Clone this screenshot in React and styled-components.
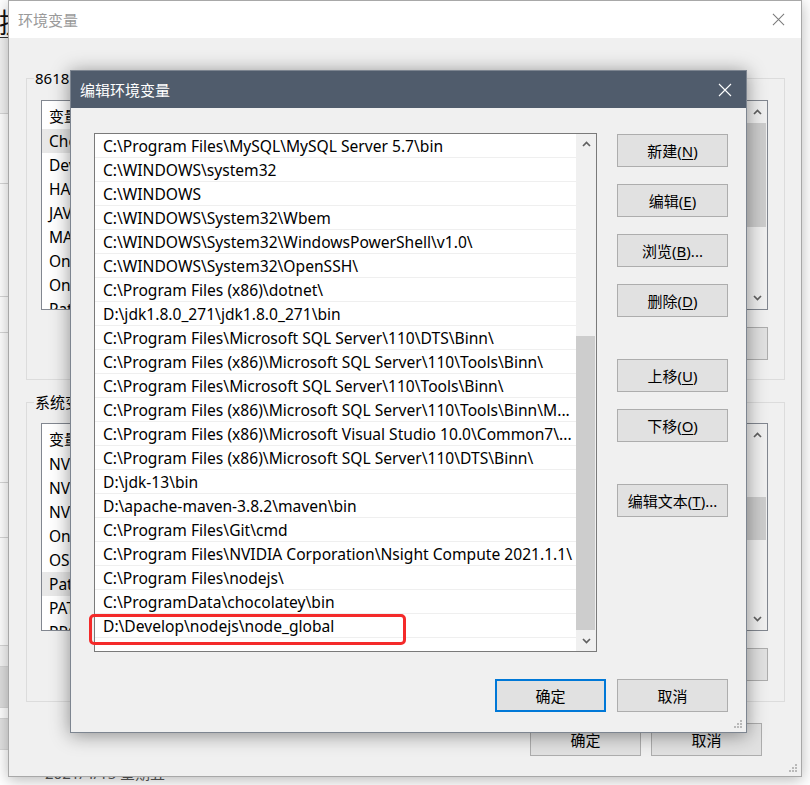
import React from "react";
import styled, { createGlobalStyle } from "styled-components";

const UI_FONT = `"Noto Sans", "Noto Sans CJK SC", sans-serif`;

const GlobalStyle = createGlobalStyle`
  html, body { margin: 0; padding: 0; background: #ffffff; }
  body { font-family: ${UI_FONT}; color: #000; }
  #root { width: 810px; height: 785px; }
`;

const userVars = [
  "ChocolateyLastPathUpdate",
  "DevEco Studio",
  "HADOOP_HOME",
  "JAVA_HOME",
  "MAVEN_HOME",
  "OneDrive",
  "OneDriveConsumer",
  "Path",
];

const systemVars = [
  "NVCUDASAMPLES_ROOT",
  "NVCUDASAMPLES11_2_ROOT",
  "NVTOOLSEXT_PATH",
  "OnlineServices",
  "OS",
  "Path",
  "PATHEXT",
  "PROCESSOR_ARCHITECTURE",
];

const paths = [
  "C:\\Program Files\\MySQL\\MySQL Server 5.7\\bin",
  "C:\\WINDOWS\\system32",
  "C:\\WINDOWS",
  "C:\\WINDOWS\\System32\\Wbem",
  "C:\\WINDOWS\\System32\\WindowsPowerShell\\v1.0\\",
  "C:\\WINDOWS\\System32\\OpenSSH\\",
  "C:\\Program Files (x86)\\dotnet\\",
  "D:\\jdk1.8.0_271\\jdk1.8.0_271\\bin",
  "C:\\Program Files\\Microsoft SQL Server\\110\\DTS\\Binn\\",
  "C:\\Program Files (x86)\\Microsoft SQL Server\\110\\Tools\\Binn\\",
  "C:\\Program Files\\Microsoft SQL Server\\110\\Tools\\Binn\\",
  "C:\\Program Files (x86)\\Microsoft SQL Server\\110\\Tools\\Binn\\M...",
  "C:\\Program Files (x86)\\Microsoft Visual Studio 10.0\\Common7\\...",
  "C:\\Program Files (x86)\\Microsoft SQL Server\\110\\DTS\\Binn\\",
  "D:\\jdk-13\\bin",
  "D:\\apache-maven-3.8.2\\maven\\bin",
  "C:\\Program Files\\Git\\cmd",
  "C:\\Program Files\\NVIDIA Corporation\\Nsight Compute 2021.1.1\\",
  "C:\\Program Files\\nodejs\\",
  "C:\\ProgramData\\chocolatey\\bin",
  "D:\\Develop\\nodejs\\node_global",
];

const backStrips = [
  { h: 76, bg: "#f2f2f2" },
  { h: 70, bg: "#ffffff" },
  { h: 113, bg: "#ffffff" },
  { h: 36, bg: "#ffffff" },
  { h: 150, bg: "#ffffff" },
  { h: 55, bg: "#ffffff" },
  { h: 108, bg: "#ffffff" },
  { h: 21, bg: "#f4f4f4" },
  { h: 41, bg: "#dedede" },
  { h: 11, bg: "#ffffff" },
  { h: 31, bg: "#e2e2e2" },
];

function Chevron({ down }) {
  return (
    <svg width="9" height="6" viewBox="0 0 9 6">
      <polyline
        points={down ? "1,1 4.5,4.5 8,1" : "1,5 4.5,1.5 8,5"}
        fill="none"
        stroke="#606060"
        strokeWidth="1.7"
      />
    </svg>
  );
}

function CloseIcon({ color, size }) {
  return (
    <svg width={size} height={size} viewBox="0 0 14 14">
      <path d="M1 1 L13 13 M13 1 L1 13" stroke={color} strokeWidth="1.1" />
    </svg>
  );
}

function Gripper() {
  return (
    <svg width="9" height="9" viewBox="0 0 9 9">
      {[
        [6, 0],
        [3, 3],
        [6, 3],
        [0, 6],
        [3, 6],
        [6, 6],
      ].map(([x, y]) => (
        <rect key={`${x}-${y}`} x={x} y={y} width="2" height="2" fill="#b9b9b9" />
      ))}
    </svg>
  );
}

function VarList({ items, selected, height, thumbTop, thumbHeight }) {
  return (
    <ListView $height={height}>
      <LVContent>
        <LVHeader>变量</LVHeader>
        {items.map((name, i) => (
          <LVRow key={name + i} $selected={i === selected}>
            {name}
          </LVRow>
        ))}
      </LVContent>
      <LVScroll>
        <LVScrollBtn>
          <Chevron />
        </LVScrollBtn>
        <ScrollTrack>
          <Thumb $top={thumbTop} $height={thumbHeight} />
        </ScrollTrack>
        <LVScrollBtn>
          <Chevron down />
        </LVScrollBtn>
      </LVScroll>
    </ListView>
  );
}

export default function App() {
  return (
    <>
      <GlobalStyle />
      <Desktop>
        <BackApp>
          <BackTitle>提示</BackTitle>
          {backStrips.map((s, i) => (
            <BackStrip key={i} $h={s.h} $bg={s.bg} />
          ))}
          <BackDate>2021/4/15 星期五</BackDate>
        </BackApp>

        <EnvWindow>
          <EnvTitleBar>
            <EnvTitle>环境变量</EnvTitle>
            <CloseIcon color="#7a7a7a" size={13} />
          </EnvTitleBar>
          <EnvBody>
            <Group>
              <Legend>86181的用户变量(U)</Legend>
              <VarList items={userVars} selected={0} height={210} thumbTop={0} thumbHeight={104} />
              <GroupButtons>
                <GroupBtn>新建(N)...</GroupBtn>
                <GroupBtn>编辑(E)...</GroupBtn>
                <GroupBtn>删除(D)</GroupBtn>
              </GroupButtons>
            </Group>
            <Group $last>
              <Legend>系统变量(S)</Legend>
              <VarList items={systemVars} selected={5} height={208} thumbTop={51} thumbHeight={43} />
              <GroupButtons>
                <GroupBtn>新建(W)...</GroupBtn>
                <GroupBtn>编辑(I)...</GroupBtn>
                <GroupBtn>删除(L)</GroupBtn>
              </GroupButtons>
            </Group>
            <EnvFooter>
              <GroupBtn $wide>确定</GroupBtn>
              <GroupBtn $wide>取消</GroupBtn>
            </EnvFooter>
          </EnvBody>
          <GripCorner>
            <Gripper />
          </GripCorner>
        </EnvWindow>

        <EditDialog>
          <DlgTitleBar>
            <DlgTitle>编辑环境变量</DlgTitle>
            <CloseIcon color="#ffffff" size={14} />
          </DlgTitleBar>
          <DlgBody>
            <DlgMain>
              <PathBox>
                <PathList>
                  {paths.map((p) => (
                    <PathRow key={p}>{p}</PathRow>
                  ))}
                </PathList>
                <PathScroll>
                  <PathScrollBtn>
                    <Chevron />
                  </PathScrollBtn>
                  <ScrollTrack>
                    <Thumb $top={182} $height={294} />
                  </ScrollTrack>
                  <PathScrollBtn>
                    <Chevron down />
                  </PathScrollBtn>
                </PathScroll>
                <Highlight />
              </PathBox>
              <ButtonColumn>
                <DlgButton $gap={1}>
                  新建(<u>N</u>)
                </DlgButton>
                <DlgButton $gap={17}>
                  编辑(<u>E</u>)
                </DlgButton>
                <DlgButton $gap={17}>
                  浏览(<u>B</u>)...
                </DlgButton>
                <DlgButton $gap={17}>
                  删除(<u>D</u>)
                </DlgButton>
                <DlgButton $gap={42}>
                  上移(<u>U</u>)
                </DlgButton>
                <DlgButton $gap={17}>
                  下移(<u>O</u>)
                </DlgButton>
                <DlgButton $gap={42}>
                  编辑文本(<u>T</u>)...
                </DlgButton>
              </ButtonColumn>
            </DlgMain>
            <DlgFooter>
              <DlgButton $primary>确定</DlgButton>
              <DlgButton>取消</DlgButton>
            </DlgFooter>
          </DlgBody>
          <GripCorner>
            <Gripper />
          </GripCorner>
        </EditDialog>
      </Desktop>
    </>
  );
}

const Desktop = styled.div`
  position: relative;
  width: 810px;
  height: 785px;
  overflow: hidden;
  background: #ffffff;
  font-family: ${UI_FONT};
`;

/* window behind everything, only its left edge shows */
const BackApp = styled.div`
  position: absolute;
  left: 0;
  top: 0;
  width: 300px;
  height: 785px;
  display: flex;
  flex-direction: column;
  background: #ffffff;
`;

const BackTitle = styled.div`
  height: 38px;
  flex-shrink: 0;
  margin-left: -1px;
  font-family: "Noto Sans CJK SC", sans-serif;
  font-size: 27px;
  line-height: 44px;
  color: #111;
  border-bottom: 1px solid #333;
  box-sizing: border-box;
`;

const BackStrip = styled.div`
  height: ${(p) => p.$h}px;
  flex-shrink: 0;
  background: ${(p) => p.$bg};
  border-bottom: 1px solid #d6d6d6;
  box-sizing: border-box;
`;

const BackDate = styled.div`
  margin-top: auto;
  height: 24px;
  padding-left: 45px;
  font-size: 15px;
  line-height: 24px;
  color: #555;
  white-space: nowrap;
`;

const EnvWindow = styled.div`
  position: absolute;
  left: 8px;
  top: 0;
  width: 794px;
  height: 777px;
  box-sizing: border-box;
  border: 1px solid #a8a8a8;
  background: #f0f0f0;
  box-shadow: 0 3px 14px rgba(0, 0, 0, 0.28);
  display: flex;
  flex-direction: column;
`;

const EnvTitleBar = styled.div`
  height: 37px;
  flex-shrink: 0;
  background: #ffffff;
  display: flex;
  align-items: center;
  justify-content: space-between;
  padding: 0 16px 0 9px;
`;

const EnvTitle = styled.span`
  font-size: 15px;
  color: #9a9a9a;
`;

const EnvBody = styled.div`
  flex: 1;
  display: flex;
  flex-direction: column;
  padding: 40px 16px 0 17px;
`;

const Group = styled.div`
  position: relative;
  border: 1px solid #dcdcdc;
  padding: ${(p) => (p.$last ? "20px 16px 20px 14px" : "21px 16px 19px 14px")};
  margin-bottom: ${(p) => (p.$last ? "21px" : "22px")};
  display: flex;
  flex-direction: column;
`;

const Legend = styled.span`
  position: absolute;
  left: 7px;
  top: -11px;
  padding: 0 1px;
  background: #f0f0f0;
  font-size: 15px;
  line-height: 20px;
  white-space: nowrap;
`;

const ListView = styled.div`
  height: ${(p) => p.$height}px;
  box-sizing: border-box;
  border: 1px solid #828790;
  background: #ffffff;
  display: flex;
  overflow: hidden;
`;

const LVContent = styled.div`
  flex: 1;
  display: flex;
  flex-direction: column;
  overflow: hidden;
`;

const LVHeader = styled.div`
  height: 28px;
  flex-shrink: 0;
  display: flex;
  align-items: center;
  padding-left: 7px;
  font-size: 15px;
`;

const LVRow = styled.div`
  height: 24px;
  flex-shrink: 0;
  display: flex;
  align-items: center;
  padding-left: 7px;
  font-size: 15.5px;
  white-space: nowrap;
  background: ${(p) => (p.$selected ? "#e8e8e8" : "transparent")};
`;

const LVScroll = styled.div`
  width: 20px;
  flex-shrink: 0;
  background: #f0f0f0;
  display: flex;
  flex-direction: column;
`;

const LVScrollBtn = styled.div`
  height: 22px;
  flex-shrink: 0;
  display: flex;
  align-items: center;
  justify-content: center;
`;

const ScrollTrack = styled.div`
  flex: 1;
  display: flex;
  flex-direction: column;
`;

const Thumb = styled.div`
  margin: ${(p) => p.$top}px 1px 0 0;
  height: ${(p) => p.$height}px;
  background: #cdcdcd;
`;

const GroupButtons = styled.div`
  margin-top: 17px;
  display: flex;
  justify-content: flex-end;
  gap: 10px;
`;

const GroupBtn = styled.div`
  width: ${(p) => (p.$wide ? 111 : 100)}px;
  height: 33px;
  box-sizing: border-box;
  border: 1px solid #adadad;
  background: #e1e1e1;
  display: flex;
  align-items: center;
  justify-content: center;
  font-size: 15px;
`;

const EnvFooter = styled.div`
  display: flex;
  justify-content: flex-end;
  gap: 10px;
  margin-right: 23px;
`;

const GripCorner = styled.div`
  position: absolute;
  right: 3px;
  bottom: 3px;
  display: flex;
`;

const EditDialog = styled.div`
  position: absolute;
  left: 70px;
  top: 70px;
  width: 677px;
  height: 663px;
  box-sizing: border-box;
  border: 1px solid #7d8590;
  background: #f0f0f0;
  box-shadow: 0 2px 18px rgba(0, 0, 0, 0.42);
  display: flex;
  flex-direction: column;
`;

const DlgTitleBar = styled.div`
  height: 37px;
  flex-shrink: 0;
  background: #505c6c;
  display: flex;
  align-items: center;
  justify-content: space-between;
  padding: 0 14px 0 9px;
`;

const DlgTitle = styled.span`
  font-size: 15px;
  color: #ffffff;
`;

const DlgBody = styled.div`
  flex: 1;
  display: flex;
  flex-direction: column;
  padding: 25px 18px 20px 23px;
`;

const DlgMain = styled.div`
  display: flex;
  gap: 20px;
`;

const PathBox = styled.div`
  position: relative;
  width: 503px;
  height: 519px;
  box-sizing: border-box;
  border: 1px solid #7a7a7a;
  background: #ffffff;
  display: flex;
`;

const PathList = styled.div`
  flex: 1;
  min-width: 0;
  display: flex;
  flex-direction: column;
  overflow: hidden;
`;

const PathRow = styled.div`
  height: 24px;
  flex-shrink: 0;
  box-sizing: border-box;
  border-bottom: 1px solid #efefef;
  padding: 1px 2px 0 8px;
  font-size: 15.6px;
  line-height: 23px;
  white-space: nowrap;
  overflow: hidden;
  text-overflow: ellipsis;
`;

const PathScroll = styled.div`
  width: 20px;
  flex-shrink: 0;
  background: #f0f0f0;
  display: flex;
  flex-direction: column;
`;

const PathScrollBtn = styled.div`
  height: 20px;
  flex-shrink: 0;
  display: flex;
  align-items: center;
  justify-content: center;
`;

const Highlight = styled.div`
  position: absolute;
  left: -6px;
  top: 480px;
  width: 317px;
  height: 31px;
  box-sizing: border-box;
  border: 3px solid #f42a2a;
  border-radius: 5px;
  pointer-events: none;
`;

const ButtonColumn = styled.div`
  width: 111px;
  display: flex;
  flex-direction: column;
`;

const DlgButton = styled.div`
  width: 111px;
  height: 33px;
  margin-top: ${(p) => p.$gap || 0}px;
  box-sizing: border-box;
  border: ${(p) => (p.$primary ? "2px solid #0078d7" : "1px solid #adadad")};
  background: #e1e1e1;
  display: flex;
  align-items: center;
  justify-content: center;
  font-size: 15px;
  white-space: nowrap;

  u {
    text-decoration-thickness: 1px;
    text-underline-offset: 2px;
  }
`;

const DlgFooter = styled.div`
  margin-top: 27px;
  display: flex;
  justify-content: flex-end;
  gap: 11px;
`;
